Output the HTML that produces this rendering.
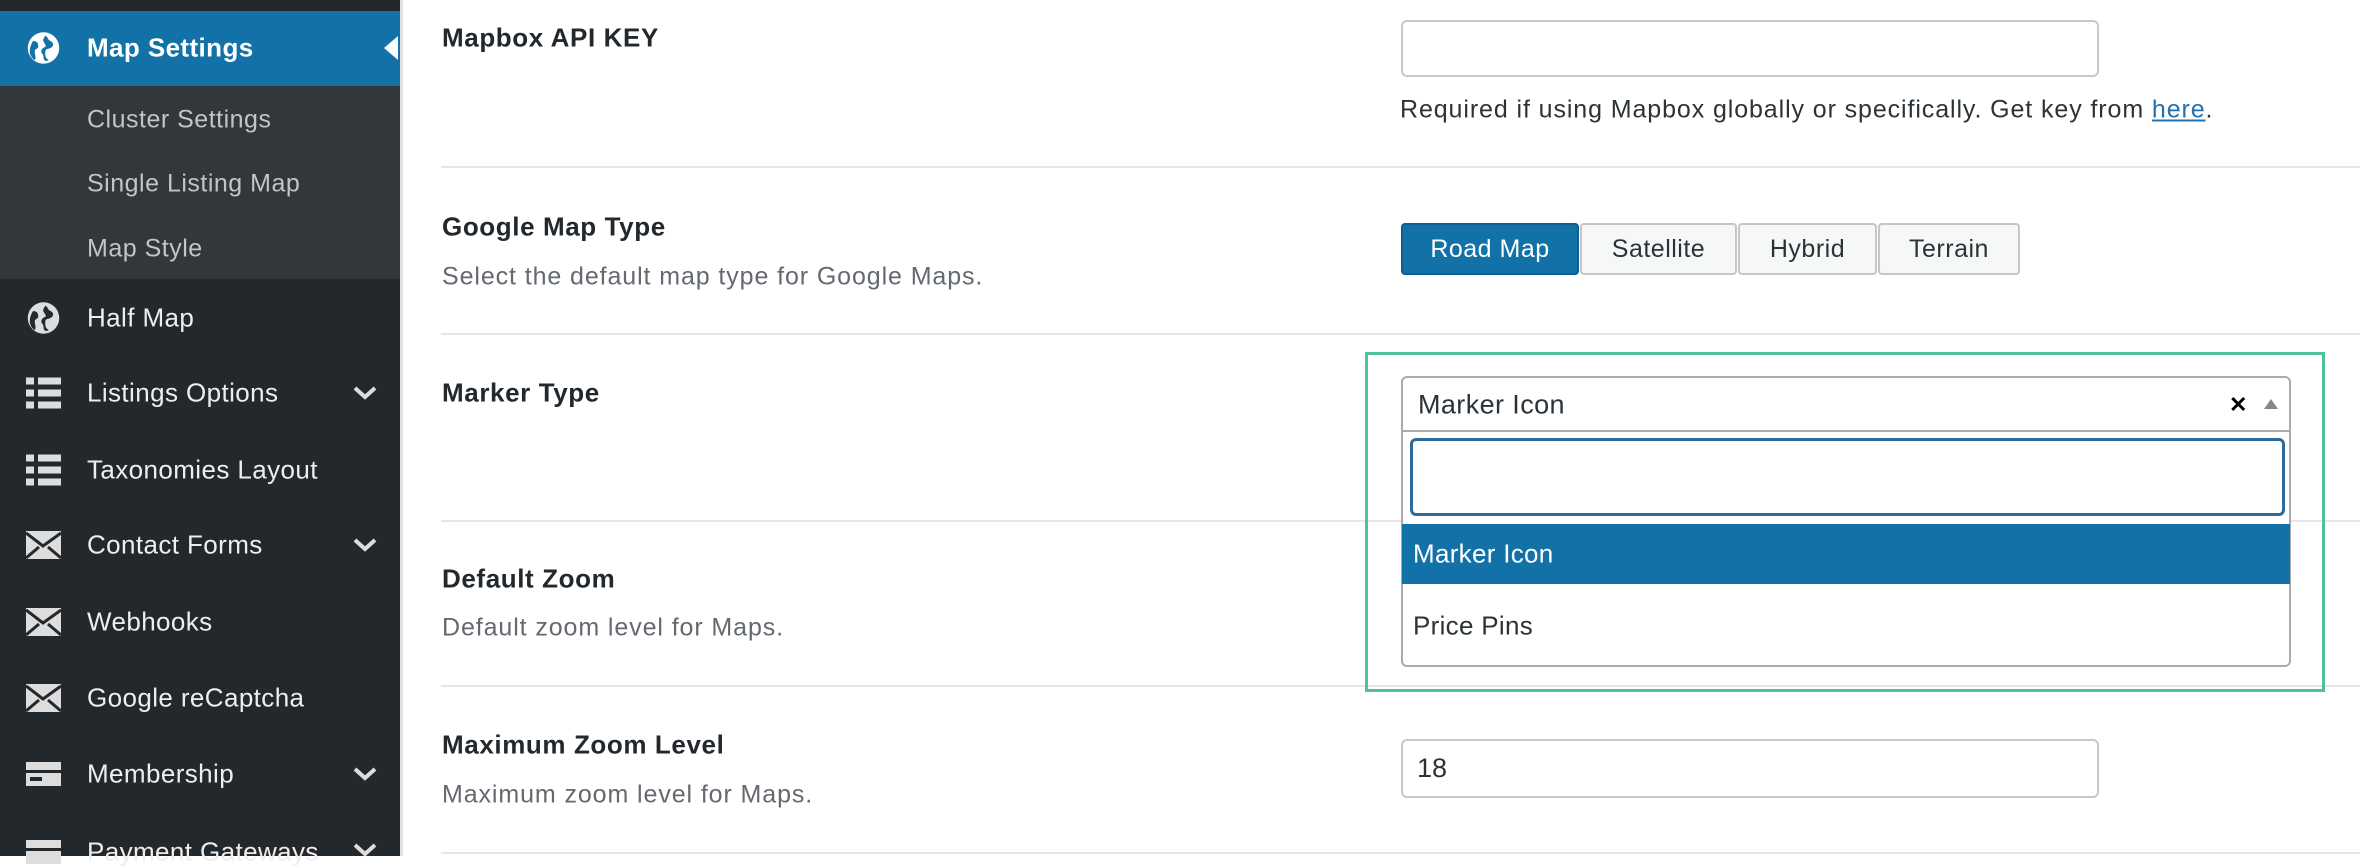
<!DOCTYPE html>
<html><head><style>
*{box-sizing:border-box;margin:0;padding:0}
body{width:2360px;height:856px;overflow:hidden;background:#fff;font-family:"Liberation Sans",sans-serif;position:relative}
.sb{position:absolute;left:0;top:0;width:400px;height:856px;background:#23282d}
.sbb{position:absolute;left:400px;top:0;width:3px;height:856px;background:#e2e2e2}
.act{position:absolute;left:0;top:11px;width:400px;height:75px;background:#1272a8}
.sub{position:absolute;left:0;top:86px;width:400px;height:193px;background:#32373c}
.it{position:absolute;left:87px;font-size:26px;letter-spacing:0.4px;color:#eee;transform:translateY(-50%);white-space:nowrap}
.si{position:absolute;left:87px;font-size:25px;letter-spacing:0.5px;color:#c3c4c7;transform:translateY(-50%)}
.ic{position:absolute;left:26px;width:35px;transform:translateY(-50%)}
.chev{position:absolute;left:353px;width:24px;height:14px;transform:translateY(-50%)}
.line{position:absolute;left:441px;right:0;height:2px;background:#e6e6e6}
.lbl{position:absolute;left:442px;font-size:26px;letter-spacing:0.6px;font-weight:bold;color:#23282d;transform:translateY(-50%)}
.desc{position:absolute;left:442px;font-size:25px;letter-spacing:0.9px;color:#646970;transform:translateY(-50%);white-space:nowrap}
.inp{position:absolute;left:1401px;width:698px;border:2px solid #c8c8c8;border-radius:6px;background:#fff;font-size:27px;color:#2c3338;padding-left:14px;display:flex;align-items:center}
.btn{position:absolute;top:223px;height:52px;border:2px solid #c6c6c6;background:#f6f7f7;color:#2c3338;font-size:25px;letter-spacing:0.5px;display:flex;align-items:center;justify-content:center;border-radius:4px}
</style></head><body>
<div class="sb"></div><div class="sbb"></div>
<div class="act"></div>
<div style="position:absolute;left:384px;top:48px;width:0;height:0;border-top:12px solid transparent;border-bottom:12px solid transparent;border-right:14px solid #fff;transform:translateY(-50%)"></div>
<div class="sub"></div>
<svg class="ic" style="top:48px" height="35" viewBox="0 0 20 20"><circle cx="10" cy="10" r="9" fill="#fff"/><path d="M4 6c2 0 3 1 3 3s-2 1-2 3 1 3 0 5c-3-2-4-6-1-11zM11 3c2 1 1 2 3 3s2 3 0 4-3 0-3 3 1 3 2 4c-2 1-3 0-3-2s-2-2-1-4 3-1 2-3-2-2 0-5z" fill="#1272a8"/></svg>
<div class="it" style="top:48px;font-weight:bold;color:#fff">Map Settings</div>
<div class="si" style="top:120px">Cluster Settings</div>
<div class="si" style="top:184px">Single Listing Map</div>
<div class="si" style="top:249px">Map Style</div>
<svg class="ic" style="top:318px" height="35" viewBox="0 0 20 20"><circle cx="10" cy="10" r="9" fill="#ddd"/><path d="M4 6c2 0 3 1 3 3s-2 1-2 3 1 3 0 5c-3-2-4-6-1-11zM11 3c2 1 1 2 3 3s2 3 0 4-3 0-3 3 1 3 2 4c-2 1-3 0-3-2s-2-2-1-4 3-1 2-3-2-2 0-5z" fill="#23282d"/></svg>
<div class="it" style="top:318px">Half Map</div>
<svg class="ic" style="top:393px" height="35" viewBox="0 0 35 35"><g fill="#ddd"><rect x="0" y="2" width="8" height="7"/><rect x="0" y="14" width="8" height="7"/><rect x="0" y="26" width="8" height="7"/><rect x="12" y="2" width="23" height="7"/><rect x="12" y="14" width="23" height="7"/><rect x="12" y="26" width="23" height="7"/></g></svg>
<div class="it" style="top:393px">Listings Options</div>
<svg class="chev" style="top:393px" viewBox="0 0 24 14"><path d="M2 2l10 9 10-9" stroke="#ddd" stroke-width="4" fill="none"/></svg>
<svg class="ic" style="top:470px" height="35" viewBox="0 0 35 35"><g fill="#ddd"><rect x="0" y="2" width="8" height="7"/><rect x="0" y="14" width="8" height="7"/><rect x="0" y="26" width="8" height="7"/><rect x="12" y="2" width="23" height="7"/><rect x="12" y="14" width="23" height="7"/><rect x="12" y="26" width="23" height="7"/></g></svg>
<div class="it" style="top:470px">Taxonomies Layout</div>
<svg class="ic" style="top:545px" height="28" viewBox="0 0 35 28"><path d="M0 0h35v28H0z" fill="#ddd"/><path d="M0 2l17 13L35 2M0 27l13-11M35 27L22 16" stroke="#23282d" stroke-width="3" fill="none"/></svg>
<div class="it" style="top:545px">Contact Forms</div>
<svg class="chev" style="top:545px" viewBox="0 0 24 14"><path d="M2 2l10 9 10-9" stroke="#ddd" stroke-width="4" fill="none"/></svg>
<svg class="ic" style="top:622px" height="28" viewBox="0 0 35 28"><path d="M0 0h35v28H0z" fill="#ddd"/><path d="M0 2l17 13L35 2M0 27l13-11M35 27L22 16" stroke="#23282d" stroke-width="3" fill="none"/></svg>
<div class="it" style="top:622px">Webhooks</div>
<svg class="ic" style="top:698px" height="28" viewBox="0 0 35 28"><path d="M0 0h35v28H0z" fill="#ddd"/><path d="M0 2l17 13L35 2M0 27l13-11M35 27L22 16" stroke="#23282d" stroke-width="3" fill="none"/></svg>
<div class="it" style="top:698px">Google reCaptcha</div>
<svg class="ic" style="top:774px" height="24" viewBox="0 0 35 24"><path d="M0 0h35v24H0z" fill="#ddd"/><rect x="0" y="8" width="35" height="3" fill="#23282d"/><rect x="4" y="15" width="12" height="4" fill="#23282d"/></svg>
<div class="it" style="top:774px">Membership</div>
<svg class="chev" style="top:774px" viewBox="0 0 24 14"><path d="M2 2l10 9 10-9" stroke="#ddd" stroke-width="4" fill="none"/></svg>
<svg class="ic" style="top:852px" height="24" viewBox="0 0 35 24"><path d="M0 0h35v24H0z" fill="#ddd"/><rect x="0" y="8" width="35" height="3" fill="#23282d"/></svg>
<div class="it" style="top:852px">Payment Gateways</div>
<svg class="chev" style="top:850px" viewBox="0 0 24 14"><path d="M2 2l10 9 10-9" stroke="#ddd" stroke-width="4" fill="none"/></svg>

<div class="line" style="top:166px"></div>
<div class="line" style="top:333px"></div>
<div class="line" style="top:520px"></div>
<div class="line" style="top:685px"></div>
<div class="line" style="top:852px"></div>

<div class="lbl" style="top:38px">Mapbox API KEY</div>
<div class="inp" style="top:20px;height:57px"></div>
<div style="position:absolute;left:1400px;top:110px;transform:translateY(-50%);font-size:25px;letter-spacing:0.9px;color:#2c3338;white-space:nowrap">Required if using Mapbox globally or specifically. Get key from <span style="color:#2271b1;text-decoration:underline">here</span>.</div>

<div class="lbl" style="top:227px">Google Map Type</div>
<div class="desc" style="top:277px">Select the default map type for Google Maps.</div>
<div class="btn" style="left:1401px;width:178px;background:#1272a8;border-color:#0f5f8e;color:#fff">Road Map</div>
<div class="btn" style="left:1580px;width:157px">Satellite</div>
<div class="btn" style="left:1738px;width:139px">Hybrid</div>
<div class="btn" style="left:1878px;width:142px">Terrain</div>

<div class="lbl" style="top:393px">Marker Type</div>
<div class="lbl" style="top:579px">Default Zoom</div>
<div class="desc" style="top:628px">Default zoom level for Maps.</div>
<div class="lbl" style="top:745px">Maximum Zoom Level</div>
<div class="desc" style="top:795px">Maximum zoom level for Maps.</div>
<div class="inp" style="top:739px;height:59px">18</div>

<div style="position:absolute;left:1365px;top:352px;width:960px;height:340px;border:3px solid #4dc29b"></div>
<div style="position:absolute;left:1401px;top:376px;width:890px;height:291px;border:2px solid #aaa;border-radius:6px;background:#fff"></div>
<div style="position:absolute;left:1401px;top:430px;width:890px;height:2px;background:#aaa"></div>
<div style="position:absolute;left:1418px;top:405px;transform:translateY(-50%);font-size:27px;letter-spacing:0.4px;color:#2c3338">Marker Icon</div>
<div style="position:absolute;left:2229px;top:405px;transform:translateY(-50%);font-size:22px;font-weight:bold;color:#000">✕</div>
<div style="position:absolute;left:2264px;top:399px;border-left:7px solid transparent;border-right:7px solid transparent;border-bottom:10px solid #888"></div>
<div style="position:absolute;left:1410px;top:438px;width:875px;height:78px;border:3px solid #2f6a9e;border-radius:6px;background:#fff"></div>
<div style="position:absolute;left:1402px;top:524px;width:888px;height:60px;background:#1272a8"></div>
<div style="position:absolute;left:1413px;top:554px;transform:translateY(-50%);font-size:26px;letter-spacing:0.3px;color:#fff">Marker Icon</div>
<div style="position:absolute;left:1413px;top:626px;transform:translateY(-50%);font-size:26px;letter-spacing:0.3px;color:#2c3338">Price Pins</div>
</body></html>
